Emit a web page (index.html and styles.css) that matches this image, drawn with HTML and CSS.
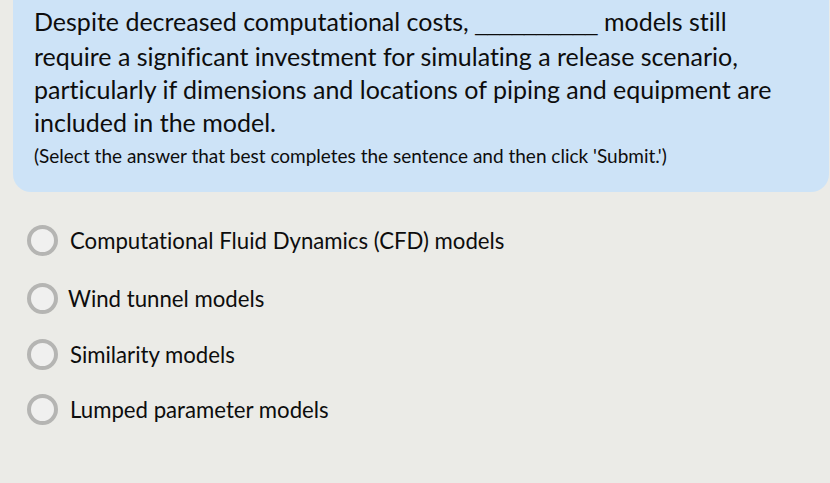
FILE: index.html
```html
<!DOCTYPE html>
<html>
<head>
<meta charset="utf-8">
<link rel="stylesheet" href="styles.css">
</head>
<body>
<div class="page">
  <div class="question">
    <p class="stem">Despite decreased computational costs, <span class="blank">__________</span> models still<br>require a significant investment for simulating a release scenario,<br>particularly if dimensions and locations of piping and equipment are<br>included in the model.</p>
    <p class="hint">(Select the answer that best completes the sentence and then click 'Submit.')</p>
  </div>
  <ul class="options">
    <li class="option"><span class="radio"></span><span class="label">Computational Fluid Dynamics (CFD) models</span></li>
    <li class="option option-2"><span class="radio"></span><span class="label label-tight">Wind tunnel models</span></li>
    <li class="option"><span class="radio"></span><span class="label">Similarity models</span></li>
    <li class="option option-4"><span class="radio"></span><span class="label">Lumped parameter models</span></li>
  </ul>
</div>
</body>
</html>
```
FILE: styles.css
```css
html, body {
  margin: 0;
  padding: 0;
}
body {
  background: #ebebe7;
  width: 830px;
  height: 483px;
  overflow: hidden;
  font-family: Lato, "Liberation Sans", sans-serif;
  font-variant-ligatures: none;
  color: #0d0d0d;
}
.page {
  display: flex;
  flex-direction: column;
}
.question {
  margin-left: 13px;
  width: 816px;
  background: #cde3f7;
  border-radius: 0 0 18px 18px;
  padding: 5px 0 0 21px;
  box-sizing: border-box;
  height: 192px;
}
.stem {
  margin: 0;
  font-size: 25px;
  line-height: 33px;
  white-space: nowrap;
}
.blank {
  font-family: "Liberation Sans", Arial, sans-serif;
  font-size: 22px;
}
.hint {
  margin: 5px 0 0 0;
  font-size: 19px;
  line-height: 24px;
  white-space: nowrap;
}
.options {
  list-style: none;
  margin: 33px 0 0 0;
  padding: 0 0 0 27px;
  display: flex;
  flex-direction: column;
  gap: 25px;
}
.option {
  display: flex;
  align-items: center;
  height: 31px;
}
.option-2 {
  margin-top: 2px;
}
.option-4 {
  margin-top: -1px;
}
.radio {
  width: 31px;
  height: 31px;
  box-sizing: border-box;
  border-radius: 50%;
  border: 4px solid #b5b5b3;
  background: #f0f0ef;
  flex: none;
}
.label {
  margin-left: 12px;
  font-size: 22.2px;
  line-height: 26px;
}
.label-tight {
  margin-left: 10px;
}
```
